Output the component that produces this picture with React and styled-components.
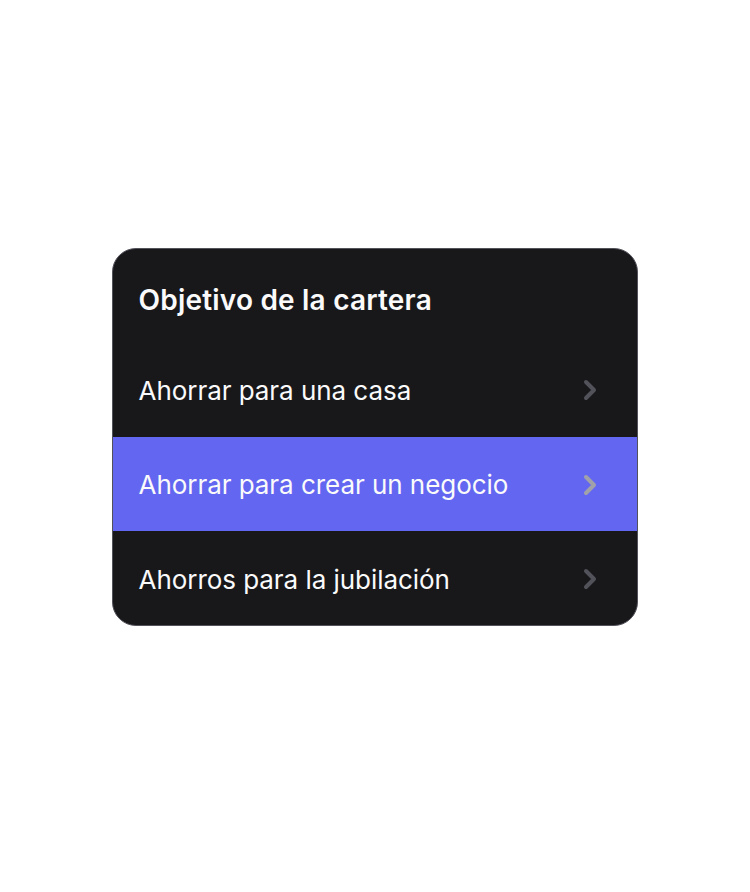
import React from "react";
import styled, { createGlobalStyle } from "styled-components";

const Global = createGlobalStyle`
  html, body { margin: 0; padding: 0; background: #ffffff; }
  body { font-family: Inter, "Noto Sans", sans-serif; }
`;

const Page = styled.div`
  width: 750px;
  height: 892px;
  display: flex;
  justify-content: center;
  padding-top: 248px;
  box-sizing: border-box;
`;

const Card = styled.div`
  width: 526px;
  height: 378px;
  box-sizing: border-box;
  background: #18181b;
  border: 1.5px solid #52525b;
  border-radius: 24px;
  overflow: hidden;
  display: flex;
  flex-direction: column;
  margin-left: -1px;
`;

const Header = styled.div`
  height: 93px;
  flex: 0 0 93px;
  box-sizing: border-box;
  padding: 35px 26px 0;
  color: #fafafa;
  font-size: 28px;
  font-weight: 600;
  line-height: 32px;
  letter-spacing: 0.2px;
`;

const Row = styled.div`
  height: 94.5px;
  flex: 0 0 94.5px;
  display: flex;
  align-items: center;
  justify-content: space-between;
  padding: 2px 31px 0 26px;
  box-sizing: border-box;
  background: ${(p) => (p.$active ? "#6366f1" : "transparent")};
  color: #fafafa;
  font-size: 26px;
  font-weight: 400;
  letter-spacing: -0.05px;
`;

const Chevron = ({ color }) => (
  <svg width="32" height="32" viewBox="0 0 24 24" fill="none" stroke={color} strokeWidth="3" strokeLinecap="round" strokeLinejoin="round">
    <path d="m9 18 6-6-6-6" />
  </svg>
);

const items = [
  { label: "Ahorrar para una casa" },
  { label: "Ahorrar para crear un negocio", active: true },
  { label: "Ahorros para la jubilación" },
];

export default function App() {
  return (
    <>
      <Global />
      <Page>
        <Card>
          <Header>Objetivo de la cartera</Header>
          {items.map((it) => (
            <Row key={it.label} $active={it.active}>
              <span>{it.label}</span>
              <Chevron color={it.active ? "#a1a1aa" : "#52525b"} />
            </Row>
          ))}
        </Card>
      </Page>
    </>
  );
}
